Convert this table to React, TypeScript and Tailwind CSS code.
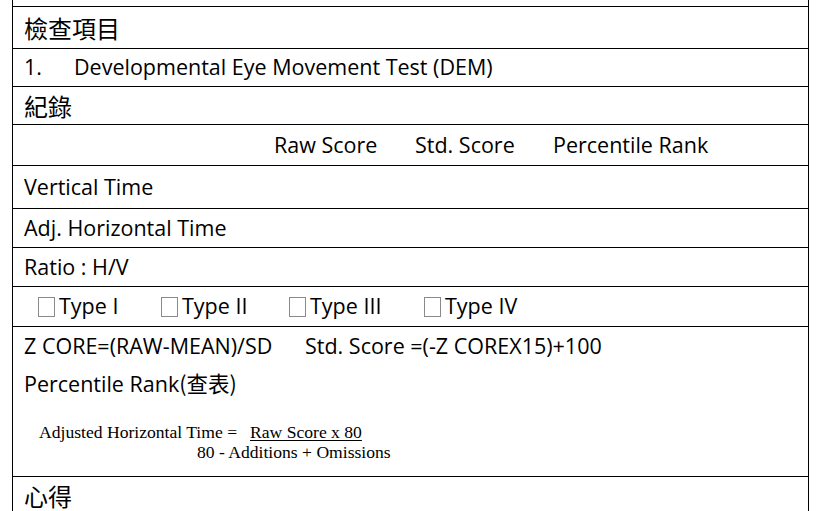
export default function App() {
  const latin = "font-['Open_Sans','Noto_Sans_CJK_TC',sans-serif]"
  const cjk = "font-['Noto_Sans_CJK_TC',sans-serif]"

  const types = [
    { label: "Type I", w: "w-[123px]" },
    { label: "Type II", w: "w-[128px]" },
    { label: "Type III", w: "w-[135px]" },
    { label: "Type IV", w: "" },
  ]

  return (
    <div className={`w-[827px] h-[511px] overflow-hidden bg-white text-black ${latin}`}>
      <div className="ml-[12px] w-[797px] border-x border-black">
        {/* previous row, cut off */}
        <div className="h-[7px] border-b border-black" />

        <div className={`h-[42px] border-b border-black pl-[11px] flex items-center text-[24px] ${cjk}`}>
          檢查項目
        </div>

        <div className="h-[38px] border-b border-black pl-[11px] flex items-center text-[21.5px]">
          <span className="w-[50px]">1.</span>
          <span>Developmental Eye Movement Test (DEM)</span>
        </div>

        <div className={`h-[38px] border-b border-black pl-[11px] flex items-center text-[24px] ${cjk}`}>
          紀錄
        </div>

        <div className="h-[41px] border-b border-black pl-[261px] flex items-center text-[21.5px]">
          <span className="w-[141px]">Raw Score</span>
          <span className="w-[138px]">Std. Score</span>
          <span>Percentile Rank</span>
        </div>

        <div className="h-[43px] border-b border-black pl-[11px] flex items-center text-[21.5px]">
          Vertical Time
        </div>

        <div className="h-[39px] border-b border-black pl-[11px] flex items-center text-[21.5px]">
          Adj. Horizontal Time
        </div>

        <div className="h-[39px] border-b border-black pl-[11px] flex items-center text-[21.5px]">
          Ratio : H/V
        </div>

        <div className="h-[40px] border-b border-black pl-[25px] flex items-center text-[21.5px]">
          {types.map((t) => (
            <div key={t.label} className={`flex items-center ${t.w}`}>
              <span className="w-[17px] h-[20px] border border-[#8a8a8a] mr-[4px]" />
              <span>{t.label}</span>
            </div>
          ))}
        </div>

        <div className="h-[150px] border-b border-black pl-[11px] pt-[1px] text-[21.5px]">
          <div className="flex leading-[36px]">
            <span className="w-[281px]">Z CORE=(RAW-MEAN)/SD</span>
            <span>Std. Score =(-Z COREX15)+100</span>
          </div>
          <div className="leading-[38px]">
            Percentile Rank<span className={cjk}>(查表)</span>
          </div>
          <div className="mt-[19px] ml-[15px] font-['Liberation_Serif',serif] text-[17.6px] leading-[20px]">
            <div className="flex">
              <span className="w-[211px]">Adjusted Horizontal Time =</span>
              <span className="underline underline-offset-2">Raw Score x 80</span>
            </div>
            <div className="ml-[158px]">80 - Additions + Omissions</div>
          </div>
        </div>

        <div className={`h-[40px] pl-[11px] pt-[3px] text-[24px] leading-[32px] ${cjk}`}>心得</div>
      </div>
    </div>
  )
}
